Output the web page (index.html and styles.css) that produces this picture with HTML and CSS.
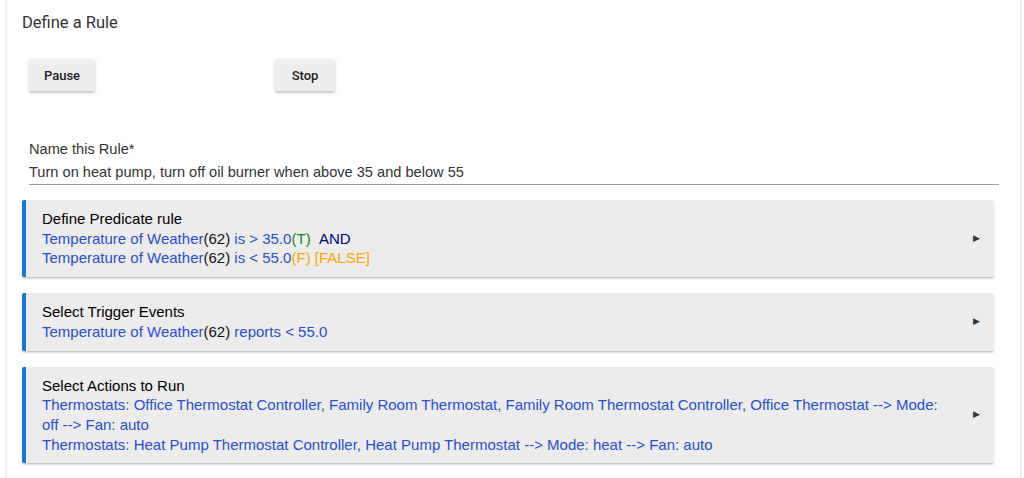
FILE: index.html
```html
<!DOCTYPE html>
<html>
<head>
    <title>Define a Rule</title>
    <link rel="stylesheet" href="styles.css">
</head>
<body>
    <div class="page">
        <h2 class="page-title">Define a Rule</h2>

        <div class="buttons">
            <button class="btn btn-pause">Pause</button>
            <button class="btn btn-stop">Stop</button>
        </div>

        <div class="field">
            <label for="ruleName">Name this Rule*</label>
            <input type="text" id="ruleName" value="Turn on heat pump, turn off oil burner when above 35 and below 55">
        </div>

        <div class="panel">
            <div class="panel-body">
                <div class="panel-title">Define Predicate rule</div>
                <div class="line">Temperature of Weather<span class="dev">(62)</span> is &gt; 35.0<span class="t">(T)</span> &nbsp;<span class="op">AND</span></div>
                <div class="line">Temperature of Weather<span class="dev">(62)</span> is &lt; 55.0<span class="f">(F)</span> <span class="f">[FALSE]</span></div>
            </div>
            <span class="arrow">&#9654;</span>
        </div>

        <div class="panel">
            <div class="panel-body">
                <div class="panel-title">Select Trigger Events</div>
                <div class="line">Temperature of Weather<span class="dev">(62)</span> reports &lt; 55.0</div>
            </div>
            <span class="arrow">&#9654;</span>
        </div>

        <div class="panel">
            <div class="panel-body">
                <div class="panel-title">Select Actions to Run</div>
                <div class="line">Thermostats: Office Thermostat Controller, Family Room Thermostat, Family Room Thermostat Controller, Office Thermostat --&gt; Mode: off --&gt; Fan: auto</div>
                <div class="line">Thermostats: Heat Pump Thermostat Controller, Heat Pump Thermostat --&gt; Mode: heat --&gt; Fan: auto</div>
            </div>
            <span class="arrow">&#9654;</span>
        </div>
    </div>
</body>
</html>
```

FILE: styles.css
```css
body {
    margin: 0;
    background-color: #ffffff;
    font-family: 'Liberation Sans', Arial, sans-serif;
}

.page {
    margin: 0 2px 0 5px;
    padding: 13px 16px 16px 15px;
    border-left: 2px solid #eeeeee;
    border-right: 2px solid #eeeeee;
    min-height: 460px;
}

.page-title {
    font-family: 'Roboto', sans-serif;
    font-size: 16.5px;
    font-weight: normal;
    color: #333333;
    margin: 0 0 27px 0;
}

.buttons {
    display: flex;
    gap: 180px;
    padding-left: 7px;
    margin-bottom: 50px;
}

.btn {
    font-family: 'Roboto', sans-serif;
    font-size: 13px;
    font-weight: 500;
    color: #222222;
    background-color: #eeeeee;
    border: none;
    border-radius: 2px;
    height: 32px;
    box-shadow: 0 2px 2px 0 rgba(0, 0, 0, 0.14), 0 1px 4px 0 rgba(0, 0, 0, 0.12);
}

.btn-pause {
    width: 66px;
}

.btn-stop {
    width: 60px;
}

.field {
    margin: 0 5px 15px 7px;
}

label {
    display: block;
    font-size: 14.6px;
    color: #333333;
    margin-bottom: 5px;
}

input[type="text"] {
    width: 100%;
    box-sizing: border-box;
    font-family: 'Liberation Sans', Arial, sans-serif;
    font-size: 14.6px;
    color: #333333;
    border: none;
    border-bottom: 1px solid #9e9e9e;
    padding: 2px 0 4px 0;
    outline: none;
}

.panel {
    display: flex;
    align-items: center;
    background-color: #ececec;
    border-left: 4px solid #1e76d3;
    border-radius: 2px;
    padding: 9px 14px 9px 16px;
    margin: 0 10px 16px 0;
    box-shadow: 0 2px 2px 0 rgba(0, 0, 0, 0.14), 0 1px 1px 0 rgba(0, 0, 0, 0.1);
    font-size: 15px;
    line-height: 19.7px;
}

.panel-body {
    flex: 1;
    padding-right: 20px;
}

.panel-title {
    color: #000000;
}

.line {
    color: #2a4fcb;
}

.dev {
    color: #111111;
}

.t {
    color: #118811;
}

.op {
    color: #000080;
}

.f {
    color: #ffa500;
}

.arrow {
    font-size: 9px;
    color: #333333;
}
```
